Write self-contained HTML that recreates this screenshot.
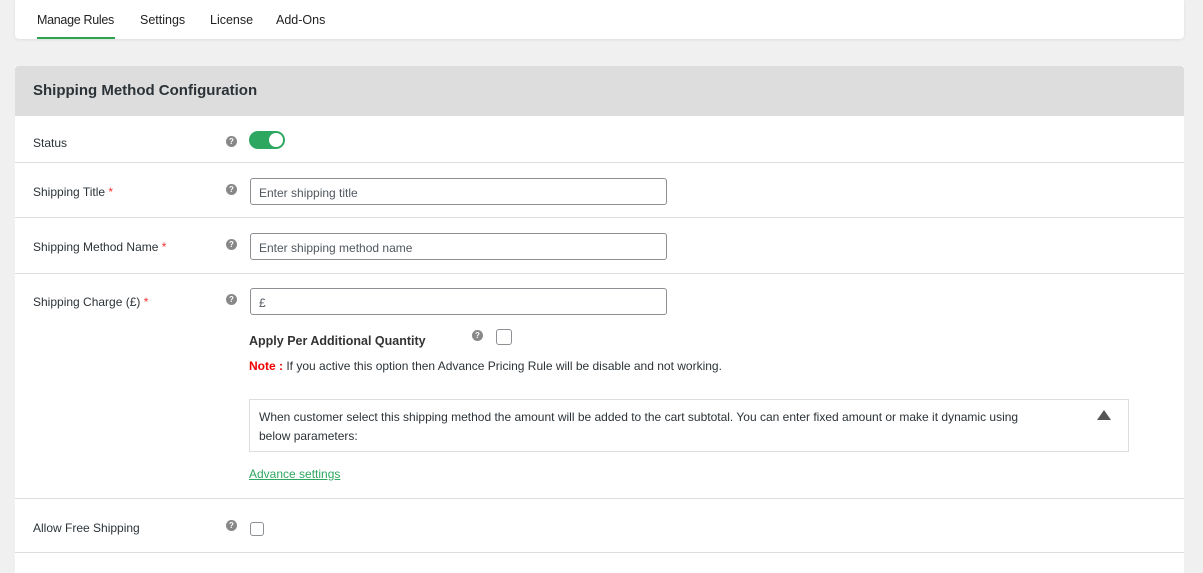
<!DOCTYPE html>
<html><head><style>
*{box-sizing:border-box;margin:0;padding:0}
body{width:1203px;height:573px;background:#f0f0f0;font-family:"Liberation Sans",sans-serif;font-size:12px;color:#2c3338;position:relative;overflow:hidden}
.nav{position:absolute;left:15px;top:0;width:1169px;height:39px;background:#fff;border-radius:0 0 4px 4px;box-shadow:0 1px 3px rgba(0,0,0,.08)}
.nav span{position:absolute;top:13px;font-size:12.5px;color:#222;white-space:nowrap}
.nav .act{border-bottom:2px solid #2ea44f;padding-bottom:10px;width:78px;letter-spacing:-0.3px}
.panel{position:absolute;left:15px;top:66px;width:1169px;height:507px;background:#fff}
.head{height:50px;background:#dddddd;border-radius:3px 3px 0 0;padding:16px 18px;font-size:15px;font-weight:bold;color:#2c3338}
.row{position:absolute;left:0;width:1169px;border-bottom:1px solid #ddd}
.lbl{position:absolute;left:18px}
.req{color:#e33}
.q{position:absolute;left:211px;width:11px;height:11px;border-radius:50%;background:#888;color:#fff;font-size:8px;font-weight:bold;text-align:center;line-height:11px}
.inp{position:absolute;left:235px;width:417px;height:27px;border:1px solid #8c8f94;border-radius:3px;padding:7px 8px;color:#50575e;font-size:12px}
.cb{position:absolute;width:14px;height:14px;border:1px solid #8c8f94;border-radius:3px;background:#fff}
</style></head><body>
<div class="nav">
<span class="act" style="left:22px">Manage Rules</span>
<span style="left:125px">Settings</span>
<span style="left:195px">License</span>
<span style="left:261px">Add-Ons</span>
</div>
<div class="panel">
<div class="head">Shipping Method Configuration</div>
<div class="row" style="top:50px;height:47px">
<div class="lbl" style="top:20px">Status</div><div class="q" style="top:20px">?</div>
<div style="position:absolute;left:234px;top:15px;width:36px;height:18px;border-radius:9px;background:#2ea760"><div style="position:absolute;right:2px;top:2px;width:14px;height:14px;border-radius:50%;background:#fff"></div></div>
</div>
<div class="row" style="top:97px;height:55px">
<div class="lbl" style="top:22px">Shipping Title <span class="req">*</span></div><div class="q" style="top:21px">?</div>
<div class="inp" style="top:15px">Enter shipping title</div>
</div>
<div class="row" style="top:152px;height:56px">
<div class="lbl" style="top:22px">Shipping Method Name <span class="req">*</span></div><div class="q" style="top:21px">?</div>
<div class="inp" style="top:15px">Enter shipping method name</div>
</div>
<div class="row" style="top:208px;height:225px">
<div class="lbl" style="top:21px">Shipping Charge (£) <span class="req">*</span></div><div class="q" style="top:20px">?</div>
<div class="inp" style="top:14px">£</div>
<div style="position:absolute;left:234px;top:60px;font-size:12.5px;font-weight:bold;color:#333">Apply Per Additional Quantity</div>
<div class="q" style="left:457px;top:56px">?</div>
<div class="cb" style="left:481px;top:55px;width:16px;height:16px"></div>
<div style="position:absolute;left:234px;top:85px"><b style="color:#e00">Note :</b> If you active this option then Advance Pricing Rule will be disable and not working.</div>
<div style="position:absolute;left:234px;top:125px;width:880px;height:53px;border:1px solid #ddd;padding:8px 100px 8px 9px;line-height:19px">When customer select this shipping method the amount will be added to the cart subtotal. You can enter fixed amount or make it dynamic using below parameters:
<div style="position:absolute;right:17px;top:10px;width:0;height:0;border-left:7px solid transparent;border-right:7px solid transparent;border-bottom:10px solid #555"></div></div>
<div style="position:absolute;left:234px;top:193px;color:#2ea760;text-decoration:underline">Advance settings</div>
</div>
<div class="row" style="top:433px;height:54px">
<div class="lbl" style="top:22px">Allow Free Shipping</div><div class="q" style="top:21px">?</div>
<div class="cb" style="left:235px;top:23px"></div>
</div>
</div>
</body></html>
